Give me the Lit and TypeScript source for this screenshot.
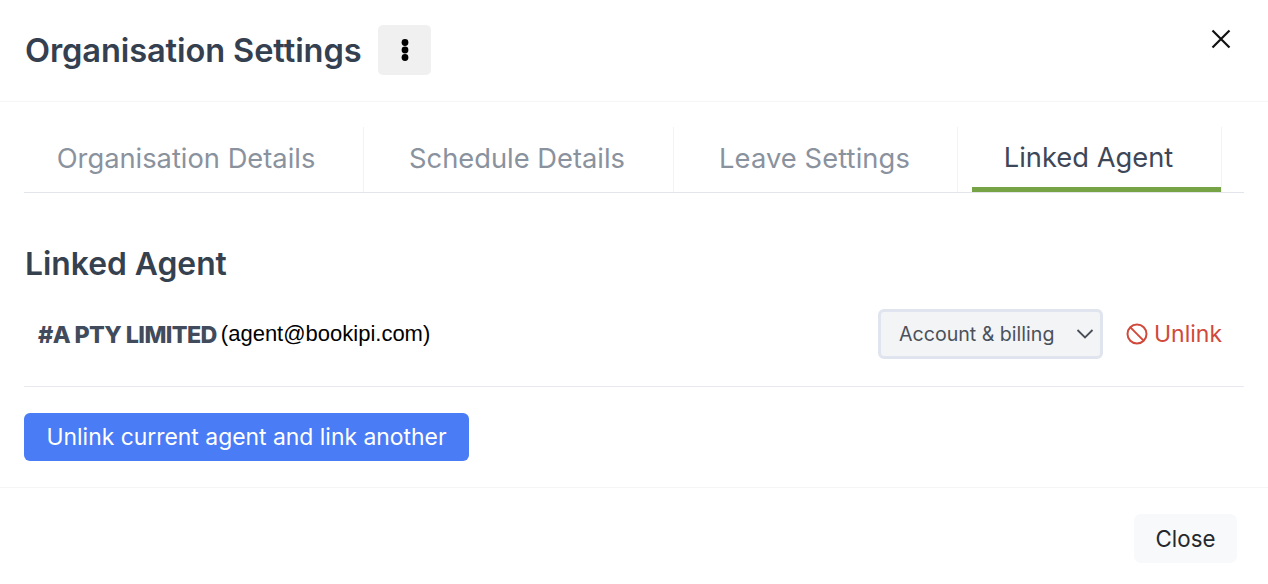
import { LitElement, html, css } from "lit";
import { customElement } from "lit/decorators.js";

@customElement("app-root")
export class AppRoot extends LitElement {
  static styles = css`
    :host { display: block; width: 1268px; height: 584px; background: #fff; overflow: hidden; font-family: Inter, "Liberation Sans", sans-serif; color: #36404f; }
    * { box-sizing: border-box; }
    .header { height: 102px; border-bottom: 1px solid #f5f5f6; padding: 25px 37px 0 25px; display: flex; align-items: flex-start; }
    .title { margin: 0; font-size: 32.6px; line-height: 50px; font-weight: 600; color: #344050; letter-spacing: -0.1px; }
    .menu { width: 53px; height: 50px; margin-left: 17px; background: #f0f0f0; border-radius: 5px; display: flex; align-items: center; justify-content: center; }
    .x { margin-left: auto; margin-top: 4px; width: 20px; height: 20px; display: block; }
    .tabs { margin: 25px 24px 0; height: 66px; display: flex; border-bottom: 1px solid #e2e5ec; }
    .tab { height: 65px; border-right: 1px solid #f3f3f5; display: flex; align-items: center; justify-content: center; font-size: 27.3px; letter-spacing: 0; color: #8a929e; position: relative; padding-bottom: 2px; }
    .t1 { width: 340px; padding-right: 15px; }
    .t2 { width: 310px; padding-right: 3px; }
    .t3 { width: 284px; padding-right: 2px; letter-spacing: 0.1px; }
    .t4 { width: 264px; color: #3d4758; padding-bottom: 4px; padding-right: 2px; }
    .t4::after { content: ""; position: absolute; left: 14px; right: 0; bottom: 0; height: 5px; background: #76a345; }
    .section { padding: 0 24px; }
    .h2 { margin: 49px 0 0 1px; font-size: 31.8px; line-height: 44px; font-weight: 600; color: #364150; }
    .row { height: 101px; border-bottom: 1px solid #e9e9f2; display: flex; align-items: flex-start; }
    .name { margin: 27px 0 0 14px; line-height: 44px; font-size: 23.3px; font-weight: 800; color: #414b5b; letter-spacing: -0.6px; }
    .mail { margin: 26px 0 0 4px; line-height: 44px; font-family: "Liberation Sans", Arial, sans-serif; font-size: 22px; color: #000; }
    .select { margin: 23px 0 0 auto; width: 225px; height: 50px; border: 3px solid #e0e4ee; border-radius: 6px; background: #f3f4f6; display: flex; align-items: center; padding: 0 6px 0 18px; font-size: 19.6px; color: #4b515a; justify-content: space-between; }
    .unlink { margin: 23px 22px 0 23px; width: 96px; height: 50px; display: flex; align-items: center; gap: 6px; color: #d0493a; font-size: 23px; }
    .btn { margin-top: 26px; width: 445px; height: 48px; border-radius: 6px; background: #4a7cf6; color: #fff; font-size: 22.9px; display: flex; align-items: center; justify-content: center; }
    .footer { margin-top: 26px; border-top: 1px solid #f5f5f6; padding: 26px 31px 0 0; display: flex; justify-content: flex-end; }
    .close { width: 103px; height: 49px; border-radius: 7px; background: #f8f9fb; color: #25282d; font-size: 22.3px; display: flex; align-items: center; justify-content: center; }
    svg { flex: none; display: block; }
  `;

  render() {
    return html`
      <div class="header">
        <h1 class="title">Organisation Settings</h1>
        <div class="menu">
          <svg width="8" height="24" viewBox="0 0 8 24"><circle cx="4" cy="4.5" r="3.4" fill="#000"/><circle cx="4" cy="12" r="3.4" fill="#000"/><circle cx="4" cy="19.5" r="3.4" fill="#000"/></svg>
        </div>
        <svg class="x" viewBox="0 0 20 20"><path d="M1.5 1.5 18.5 18.5M18.5 1.5 1.5 18.5" stroke="#111" stroke-width="2.2" fill="none"/></svg>
      </div>
      <div class="tabs">
        <div class="tab t1">Organisation Details</div>
        <div class="tab t2">Schedule Details</div>
        <div class="tab t3">Leave Settings</div>
        <div class="tab t4">Linked Agent</div>
      </div>
      <div class="section">
        <h2 class="h2">Linked Agent</h2>
        <div class="row">
          <span class="name">#A PTY LIMITED</span>
          <span class="mail">(agent@bookipi.com)</span>
          <div class="select">
            <span>Account &amp; billing</span>
            <svg width="18" height="10" viewBox="0 0 18 10"><path d="M1.5 1 9 8.5 16.5 1" stroke="#4a4f57" stroke-width="1.8" fill="none"/></svg>
          </div>
          <div class="unlink">
            <svg width="22" height="22" viewBox="0 0 22 22"><circle cx="11" cy="11" r="9.5" stroke="#d0493a" stroke-width="2" fill="none"/><path d="M4.4 4.4 17.6 17.6" stroke="#d0493a" stroke-width="2"/></svg>
            <span>Unlink</span>
          </div>
        </div>
        <div class="btn">Unlink current agent and link another</div>
      </div>
      <div class="footer"><div class="close">Close</div></div>
    `;
  }
}
